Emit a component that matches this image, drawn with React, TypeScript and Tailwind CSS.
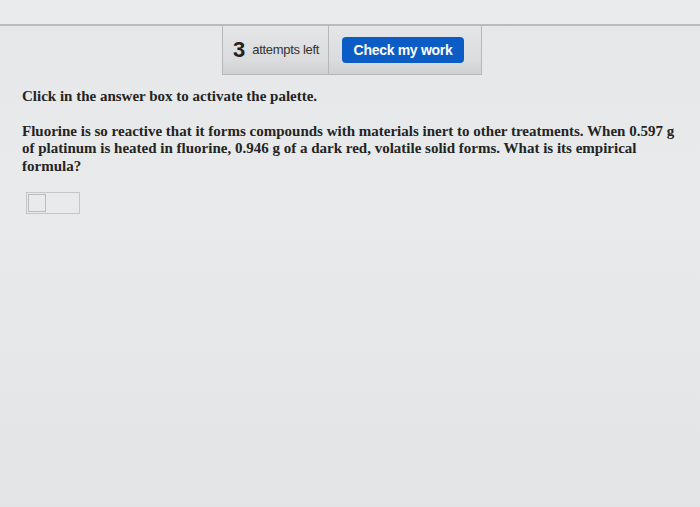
export default function App() {
  return (
    <div className="w-[700px] h-[507px] overflow-hidden bg-[linear-gradient(180deg,#e5e7e8_0%,#e8eaeb_40%,#e2e4e5_100%)] flex flex-col" style={{ fontFamily: '"Liberation Serif", serif' }}>
      <div className="h-[24px] bg-[#e9ebec] shrink-0"></div>
      <div className="h-[2px] bg-[#b9bbbd] shrink-0"></div>
      <div className="flex justify-center shrink-0">
        <div className="ml-[4px] flex h-[49px] border border-t-0 border-[#b5b7b9] bg-[linear-gradient(180deg,#e4e6e7_0%,#dadcdd_70%,#cfd1d2_100%)]" style={{ fontFamily: '"Liberation Sans", Arial, sans-serif' }}>
          <div className="w-[106px] flex items-center pl-[10px] gap-[7px] border-r border-[#b5b7b9]">
            <span className="text-[22px] font-bold text-[#222] leading-none">3</span>
            <span className="text-[13px] text-[#333] tracking-[-0.3px]">attempts left</span>
          </div>
          <div className="w-[152px] flex items-center pl-[13px]">
            <div className="w-[122px] h-[26px] rounded-[4px] bg-[#0b5cc5] text-white font-bold text-[14px] flex items-center justify-center tracking-[-0.3px]">
              Check my work
            </div>
          </div>
        </div>
      </div>
      <div className="px-[22px] pt-[13px] text-[#242424] font-bold text-[15px] leading-[17.5px]">
        <p>Click in the answer box to activate the palette.</p>
        <p className="mt-[17px]">
          Fluorine is so reactive that it forms compounds with materials inert to other treatments. When 0.597 g of platinum is heated in fluorine, 0.946 g of a dark red, volatile solid forms. What is its empirical formula?
        </p>
        <div className="mt-[17px] ml-[4px] w-[54px] h-[22px] border border-[#c4c6c8] flex items-center pl-[1px]">
          <div className="w-[18px] h-[18px] border border-[#b9bbbd]"></div>
        </div>
      </div>
    </div>
  );
}
